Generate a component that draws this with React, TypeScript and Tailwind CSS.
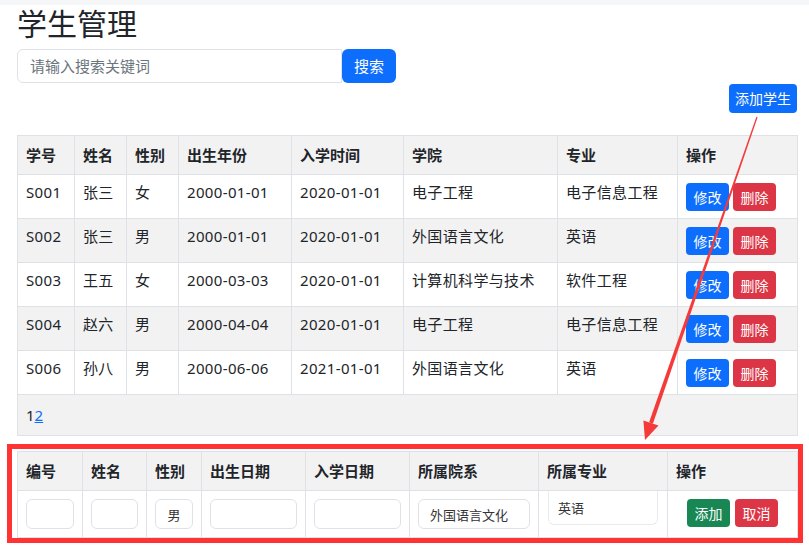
import { Fragment } from 'react'

interface Student {
  id: string
  name: string
  gender: string
  birth: string
  enroll: string
  college: string
  major: string
}

const students: Student[] = [
  { id: 'S001', name: '张三', gender: '女', birth: '2000-01-01', enroll: '2020-01-01', college: '电子工程', major: '电子信息工程' },
  { id: 'S002', name: '张三', gender: '男', birth: '2000-01-01', enroll: '2020-01-01', college: '外国语言文化', major: '英语' },
  { id: 'S003', name: '王五', gender: '女', birth: '2000-03-03', enroll: '2020-01-01', college: '计算机科学与技术', major: '软件工程' },
  { id: 'S004', name: '赵六', gender: '男', birth: '2000-04-04', enroll: '2020-01-01', college: '电子工程', major: '电子信息工程' },
  { id: 'S006', name: '孙八', gender: '男', birth: '2000-06-06', enroll: '2021-01-01', college: '外国语言文化', major: '英语' },
]

const listHeads = ['学号', '姓名', '性别', '出生年份', '入学时间', '学院', '专业', '操作']
const listWidths = ['w-[57px]', 'w-[52px]', 'w-[52px]', 'w-[113px]', 'w-[112px]', 'w-[154px]', 'w-[120px]', 'w-[120px]']

const formHeads = ['编号', '姓名', '性别', '出生日期', '入学日期', '所属院系', '所属专业', '操作']
const formWidths = ['w-[65px]', 'w-[64px]', 'w-[55px]', 'w-[104px]', 'w-[104px]', 'w-[129px]', 'w-[129px]', 'w-[130px]']

const cell = 'border border-[#dee2e6] px-[8px] align-top'
const th = `${cell} py-[7px] text-left font-bold leading-[24px]`

function FormInput({ value = '', center = false }: { value?: string, center?: boolean }) {
  return (
    <input
      readOnly
      value={value}
      className={`block h-[30px] w-full rounded-[6px] border border-[#dee2e6] bg-white text-[13px] text-[#333] outline-none ${center ? 'px-[4px] text-center' : 'px-[11px]'}`}
    />
  )
}

export default function App() {
  return (
    <div className="relative h-[546px] w-[809px] overflow-hidden bg-white font-['Noto_Sans','Noto_Sans_CJK_SC',sans-serif] text-[15px] text-[#212529]">
      <div className="h-[5px] bg-[#f5f6f8]" />

      <div className="pr-[12px] pl-[17px]">
        <h1 className="mt-[1px] text-[30px] leading-[36px] font-normal">学生管理</h1>

        <div className="mt-[7px] flex h-[34px] w-[379px]">
          <input
            readOnly
            placeholder="请输入搜索关键词"
            className="h-full min-w-0 flex-1 rounded-l-[6px] border border-[#dee2e6] px-[12px] text-[15px] outline-none placeholder:text-[#6c757d]"
          />
          <button type="button" className="h-full w-[54px] rounded-[6px] bg-[#0d6efd] text-[15px] text-white">搜索</button>
        </div>

        <div className="mt-[1px] flex justify-end">
          <button type="button" className="h-[29px] w-[68px] rounded-[4px] bg-[#0d6efd] text-[14px] text-white">添加学生</button>
        </div>

        <table className="mt-[22px] w-[780px] table-fixed border-collapse">
          <colgroup>
            {listWidths.map((w, i) => <col key={i} className={w} />)}
          </colgroup>
          <thead>
            <tr className="bg-[#f2f2f2]">
              {listHeads.map(h => <th key={h} className={th}>{h}</th>)}
            </tr>
          </thead>
          <tbody>
            {students.map((s, i) => (
              <tr key={s.id} className={i % 2 === 1 ? 'bg-[#f2f2f2]' : 'bg-white'}>
                {[s.id, s.name, s.gender, s.birth, s.enroll, s.college, s.major].map((v, j) => (
                  <td key={j} className={`${cell} pt-[5px] pb-[7px] leading-[24px] tracking-[0.35px]`}>{v}</td>
                ))}
                <td className={`${cell} pt-[8px] pb-[7px]`}>
                  <div className="flex gap-[4px]">
                    <button type="button" className="h-[28px] w-[43px] rounded-[4px] bg-[#0d6efd] text-[14px] text-white">修改</button>
                    <button type="button" className="h-[28px] w-[43px] rounded-[4px] bg-[#dc3545] text-[14px] text-white">删除</button>
                  </div>
                </td>
              </tr>
            ))}
            <tr className="bg-[#f2f2f2]">
              <td colSpan={8} className={`${cell} py-[8px] leading-[24px]`}>
                <span>1</span>
                <a className="text-[#0d6efd] underline">2</a>
              </td>
            </tr>
          </tbody>
        </table>

        <table className="mt-[15px] w-[780px] table-fixed border-collapse">
          <colgroup>
            {formWidths.map((w, i) => <col key={i} className={w} />)}
          </colgroup>
          <thead>
            <tr className="bg-[#f2f2f2]">
              {formHeads.map((h, i) => <th key={i} className={th}>{h}</th>)}
            </tr>
          </thead>
          <tbody>
            <tr className="bg-white">
              {['', '', '男', '', '', '外国语言文化'].map((v, j) => (
                <td key={j} className={`${cell} py-[8px]`}>
                  <FormInput value={v} center={v === '男'} />
                </td>
              ))}
              <td className={`${cell} p-0`}>
                <div className="mx-px h-[34px] rounded-b-[6px] border-x border-b border-[#e9ecef] bg-white pt-[7px] pl-[9px] text-[13px] leading-[20px] text-[#333]">英语</div>
              </td>
              <td className={`${cell} py-[8px]`}>
                <div className="flex justify-center gap-[5px]">
                  <button type="button" className="h-[28px] w-[43px] rounded-[4px] bg-[#198754] text-[14px] text-white">添加</button>
                  <button type="button" className="h-[28px] w-[43px] rounded-[4px] bg-[#dc3545] text-[14px] text-white">取消</button>
                </div>
              </td>
            </tr>
          </tbody>
        </table>
      </div>

      {/* annotation: red box + arrow drawn over the screenshot */}
      <div className="pointer-events-none absolute top-[444px] left-[7px] h-[99px] w-[796px] border-[5px] border-[#ff3333]" />
      <svg className="pointer-events-none absolute inset-0" width="809" height="546" viewBox="0 0 809 546">
        <Fragment>
          <polygon points="757.6,117.2 756.4,116.8 649.1,422.3 652.9,423.7" fill="#f53a3a" />
          <polygon points="645,440 643.4,420.4 658.5,425.6" fill="#f53a3a" />
        </Fragment>
      </svg>
    </div>
  )
}
